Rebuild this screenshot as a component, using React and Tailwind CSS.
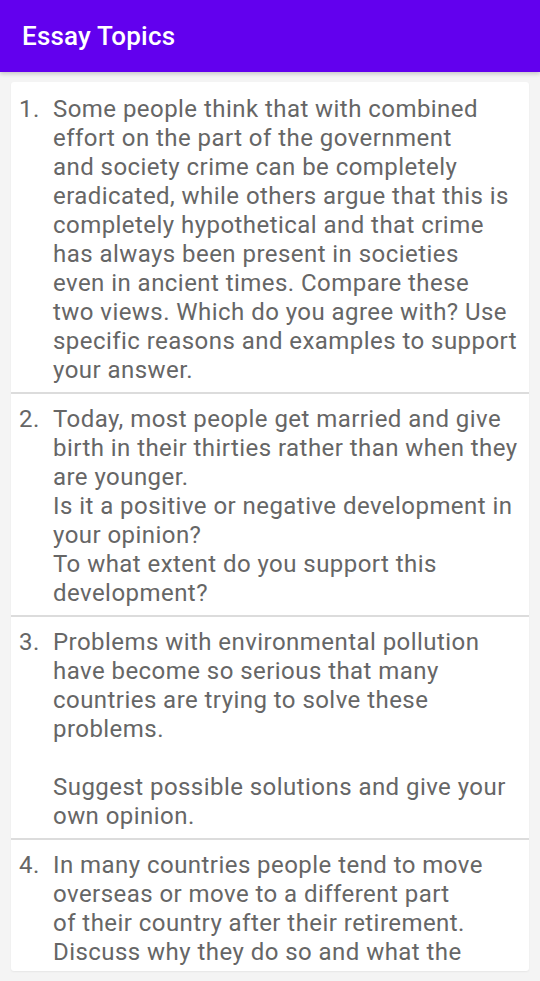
import React from "react";

const items = [
  [
    "Some people think that with combined",
    "effort on the part of the government",
    "and society crime can be completely",
    "eradicated, while others argue that this is",
    "completely hypothetical and that crime",
    "has always been present in societies",
    "even in ancient times. Compare these",
    "two views. Which do you agree with? Use",
    "specific reasons and examples to support",
    "your answer.",
  ],
  [
    "Today, most people get married and give",
    "birth in their thirties rather than when they",
    "are younger.",
    "Is it a positive or negative development in",
    "your opinion?",
    "To what extent do you support this",
    "development?",
  ],
  [
    "Problems with environmental pollution",
    "have become so serious that many",
    "countries are trying to solve these",
    "problems.",
    "",
    "Suggest possible solutions and give your",
    "own opinion.",
  ],
  [
    "In many countries people tend to move",
    "overseas or move to a different part",
    "of their country after their retirement.",
    "Discuss why they do so and what the",
    "consequences of this trend may be.",
  ],
];

export default function App() {
  return (
    <div
      className="w-[540px] h-[981px] bg-[#f4f4f4] flex flex-col overflow-hidden"
      style={{ fontFamily: "Roboto, 'Noto Sans', sans-serif" }}
    >
      <header className="h-[72px] shrink-0 bg-[#6200ee] flex items-center pl-[22px] shadow-[0_2px_4px_rgba(0,0,0,0.18)] z-10">
        <h1 className="text-white text-[26px] font-medium leading-none pb-[1px] tracking-[0.2px]">
          Essay Topics
        </h1>
      </header>
      <main className="flex-1 pt-[10px] px-[11px] pb-[10px] min-h-0">
        <div className="h-full bg-white rounded-[3px] shadow-[0_1px_2px_rgba(0,0,0,0.06)] overflow-hidden pt-[2px]">
          {items.map((lines, i) => (
            <div key={i}>
              <div className="flex pl-[8px] pt-[11px] pb-[7px] text-[24px] leading-[29px] text-[#666666] tracking-[0.45px]">
                <span className="w-[34px] shrink-0">{i + 1}.</span>
                <div>
                  {lines.map((l, j) => (
                    <div key={j} className="whitespace-nowrap h-[29px]">
                      {l}
                    </div>
                  ))}
                </div>
              </div>
              <div className="h-[2px] bg-[#dcdcdc]" />
            </div>
          ))}
        </div>
      </main>
    </div>
  );
}
